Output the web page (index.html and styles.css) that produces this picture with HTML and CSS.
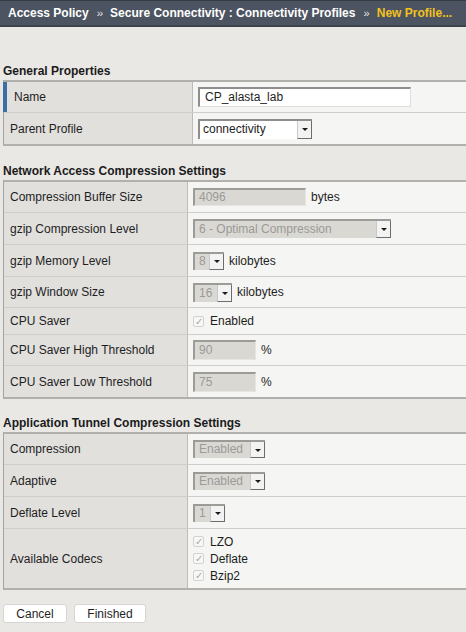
FILE: index.html
```html
<!DOCTYPE html>
<html>
<head>
<meta charset="utf-8">
<link rel="stylesheet" href="styles.css">
</head>
<body>
<div class="header">
  <span>Access Policy</span><span class="sep">››</span><span>Secure Connectivity : Connectivity Profiles</span><span class="sep">››</span><span class="current">New Profile...</span>
</div>

<h2 class="heading h-general">General Properties</h2>
<div class="table t-general">
  <div class="row r30 required">
    <div class="label">Name</div>
    <div class="value"><span class="input w-name">CP_alasta_lab</span></div>
  </div>
  <div class="row r31">
    <div class="label">Parent Profile</div>
    <div class="value"><span class="sel w-parent"><span class="sel-text">connectivity</span><span class="arrow"></span></span></div>
  </div>
</div>

<h2 class="heading h-network">Network Access Compression Settings</h2>
<div class="table t-narrow">
  <div class="row r30">
    <div class="label">Compression Buffer Size</div>
    <div class="value"><span class="input dis w-buf">4096</span><span class="unit">bytes</span></div>
  </div>
  <div class="row r31">
    <div class="label">gzip Compression Level</div>
    <div class="value"><span class="sel dis w-opt"><span class="sel-text">6 - Optimal Compression</span><span class="arrow"></span></span></div>
  </div>
  <div class="row r31">
    <div class="label">gzip Memory Level</div>
    <div class="value"><span class="sel dis w-8"><span class="sel-text">8</span><span class="arrow"></span></span><span class="unit">kilobytes</span></div>
  </div>
  <div class="row r30">
    <div class="label">gzip Window Size</div>
    <div class="value"><span class="sel dis w-16"><span class="sel-text">16</span><span class="arrow"></span></span><span class="unit">kilobytes</span></div>
  </div>
  <div class="row r26">
    <div class="label">CPU Saver</div>
    <div class="value"><span class="check">✓</span><span class="check-label">Enabled</span></div>
  </div>
  <div class="row r30">
    <div class="label">CPU Saver High Threshold</div>
    <div class="value"><span class="input dis w-pct">90</span><span class="unit">%</span></div>
  </div>
  <div class="row r31">
    <div class="label">CPU Saver Low Threshold</div>
    <div class="value"><span class="input dis w-pct">75</span><span class="unit">%</span></div>
  </div>
</div>

<h2 class="heading h-tunnel">Application Tunnel Compression Settings</h2>
<div class="table t-narrow">
  <div class="row r30">
    <div class="label">Compression</div>
    <div class="value"><span class="sel dis w-en"><span class="sel-text">Enabled</span><span class="arrow"></span></span></div>
  </div>
  <div class="row r31">
    <div class="label">Adaptive</div>
    <div class="value"><span class="sel dis w-en"><span class="sel-text">Enabled</span><span class="arrow"></span></span></div>
  </div>
  <div class="row r31">
    <div class="label">Deflate Level</div>
    <div class="value"><span class="sel dis w-1"><span class="sel-text">1</span><span class="arrow"></span></span></div>
  </div>
  <div class="row r59">
    <div class="label">Available Codecs</div>
    <div class="value codecs">
      <div class="codec"><span class="check">✓</span><span class="check-label">LZO</span></div>
      <div class="codec"><span class="check">✓</span><span class="check-label">Deflate</span></div>
      <div class="codec"><span class="check">✓</span><span class="check-label">Bzip2</span></div>
    </div>
  </div>
</div>

<div class="buttons">
  <button class="btn btn-cancel">Cancel</button>
  <button class="btn btn-finished">Finished</button>
</div>
</body>
</html>
```

FILE: styles.css
```css
* { box-sizing: border-box; }

html, body {
  margin: 0;
  padding: 0;
}

body {
  background: #e9e8e5;
  font-family: "Liberation Sans", Arial, sans-serif;
  font-size: 12px;
  color: #1e1e1e;
  width: 466px;
  overflow: hidden;
}

.header {
  height: 27px;
  background: #4c5361;
  border-top: 1px solid #363b44;
  border-bottom: 2px solid #3d424c;
  color: #ffffff;
  font-weight: bold;
  font-size: 12px;
  line-height: 24px;
  padding-left: 8px;
  white-space: nowrap;
}

.sep {
  display: inline-block;
  margin: 0 8px;
  font-weight: normal;
  color: #e6e6e6;
  font-size: 11px;
  letter-spacing: -1px;
}

.current {
  color: #f2c21c;
}

.heading {
  margin: 0;
  font-size: 12px;
  font-weight: bold;
  height: 17px;
  line-height: 17px;
  padding-left: 3px;
  color: #1b1b1b;
}

.h-general { margin-top: 36px; }
.h-network { margin-top: 17px; }
.h-tunnel { margin-top: 16px; }

.table {
  margin-left: 3px;
  border-top: 2px solid #b1b0ad;
  border-left: 1px solid #a3a2a0;
  border-bottom: 2px solid #b1b0ad;
  --lw: 184px;
}

.t-general {
  --lw: 189px;
}

.row {
  box-sizing: content-box;
  display: grid;
  grid-template-columns: var(--lw) 1fr;
  border-top: 1px solid #cfcecb;
}

.row:first-child {
  border-top: none;
}

.r30 { height: 30px; }
.r31 { height: 31px; }
.r26 { height: 26px; }
.r59 { height: 59px; }

.label {
  background: #e1e0dd;
  border-right: 1px solid #bdbcb9;
  padding-left: 6px;
  display: flex;
  align-items: center;
  white-space: nowrap;
}

.required .label {
  border-left: 4px solid #3c6fa6;
  padding-left: 7px;
  margin-left: -1px;
}

.value {
  background: #f5f5f3;
  padding-left: 5px;
  display: flex;
  align-items: center;
  white-space: nowrap;
}

.input {
  display: inline-block;
  height: 20px;
  line-height: 17px;
  background: #ffffff;
  border-top: 2px solid #8e8e8e;
  border-left: 2px solid #8e8e8e;
  border-right: 1px solid #dddddd;
  border-bottom: 1px solid #dddddd;
  padding-left: 5px;
  color: #1e1e1e;
}

.input.dis {
  background: #dad8d3;
  color: #9a9a98;
  border-top-color: #9c9b98;
  border-left-color: #9c9b98;
  border-right-color: #e6e5e2;
  border-bottom-color: #e6e5e2;
  padding-left: 4px;
}

.w-name { width: 213px; }
.w-buf { width: 113px; height: 18px; line-height: 15px; }
.w-pct { width: 63px; }

.unit {
  margin-left: 5px;
  color: #1e1e1e;
}

.sel {
  display: inline-flex;
  height: 20px;
  background: #ffffff;
  border-top: 2px solid #8e8e8e;
  border-left: 2px solid #8e8e8e;
  color: #1e1e1e;
}

.sel-text {
  flex: 1;
  padding-left: 3px;
  line-height: 17px;
  overflow: hidden;
}

.arrow {
  width: 15px;
  position: relative;
  background: #f3f3f3;
  border-left: 1px solid #c9c9c9;
  border-right: 1px solid #6d6d6d;
  border-bottom: 1px solid #6d6d6d;
}

.arrow::after {
  content: "";
  position: absolute;
  left: 50%;
  top: 50%;
  margin-left: -3px;
  margin-top: -1px;
  border-left: 3px solid transparent;
  border-right: 3px solid transparent;
  border-top: 3px solid #1a1a1a;
}

.sel.dis {
  background: #dad8d3;
  color: #9a9a98;
  border-top-color: #9c9b98;
  border-left-color: #9c9b98;
}

.sel.dis .sel-text {
  padding-left: 4px;
}

.w-parent { width: 114px; }
.w-opt { width: 198px; height: 19px; }
.w-8 { width: 31px; height: 18px; }
.w-16 { width: 39px; height: 19px; }
.w-en { width: 72px; height: 18px; }
.w-1 { width: 32px; height: 18px; }

.w-8 .sel-text, .w-en .sel-text, .w-1 .sel-text { line-height: 15px; }

.check {
  display: inline-block;
  width: 11px;
  height: 11px;
  border: 1px solid #d2d2d0;
  border-radius: 2px;
  background: #f7f7f6;
  color: #a9a9a9;
  font-size: 10px;
  line-height: 10px;
  text-align: center;
  overflow: hidden;
}

.check-label {
  margin-left: 6px;
}

.codecs {
  flex-direction: column;
  align-items: flex-start;
  justify-content: center;
}

.codec {
  height: 17px;
  display: flex;
  align-items: center;
}

.buttons {
  margin-top: 14px;
  padding-left: 3px;
  display: flex;
  gap: 7px;
}

.btn {
  font-family: "Liberation Sans", Arial, sans-serif;
  font-size: 12px;
  height: 19px;
  padding: 0;
  background: #ffffff;
  border: 1px solid #d6d5d2;
  border-radius: 3px;
  color: #1e1e1e;
}

.btn-cancel { width: 64px; }
.btn-finished { width: 72px; }
```
